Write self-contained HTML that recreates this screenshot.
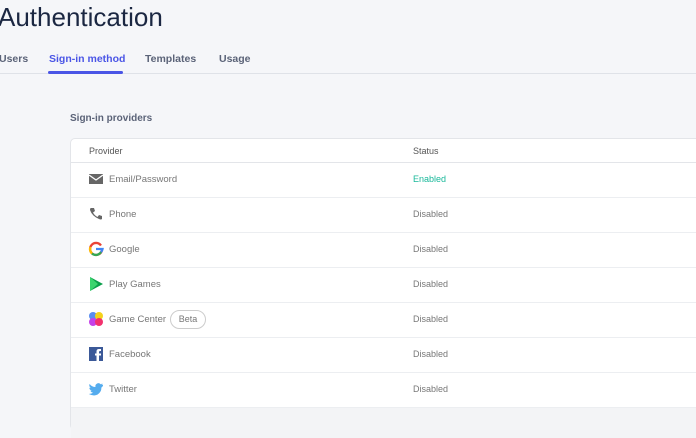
<html><head><style>
body{margin:0;width:696px;height:416px;background:#f5f6f9;font-family:"Liberation Sans",sans-serif;position:relative;overflow:hidden}
.t{position:absolute;left:-2px;top:2px;font-size:26px;color:#1b2742}
.tab{position:absolute;top:53px;font-size:10.5px;font-weight:bold;color:#5b6378}
.line{position:absolute;left:0;right:0;top:73px;height:1px;background:#dfe2e8}
.ul{position:absolute;left:48px;width:75px;top:71px;height:3px;background:#4a55e6;border-radius:2px}
.sp{position:absolute;left:70px;top:113px;font-size:10px;font-weight:bold;color:#5b6378}
.card{position:absolute;left:70px;top:138px;width:640px;height:290px;background:#fff;border:1px solid #e3e5e9;border-radius:5px}
.hd{position:absolute;top:0;left:0;right:0;height:23px;border-bottom:1px solid #e3e5e9;font-size:9px;color:#555}
.row{position:absolute;left:0;right:0;height:35px;border-bottom:1px solid #eceef1;font-size:9.5px;color:#777}
.row .n{position:absolute;left:38px;top:12px}
.row .s{position:absolute;left:342px;top:12px;font-size:9px}
.row .i{position:absolute;left:17px;top:9px;width:16px;height:16px}
.foot{position:absolute;left:0;right:0;top:269px;height:30px;background:#f3f4f6}
.beta{position:absolute;left:99px;top:8px;border:1px solid #ccc;border-radius:10px;width:34px;height:17px;line-height:17px;text-align:center;font-size:9px;color:#777}
</style></head><body>
<div class="t">Authentication</div>
<div class="tab" style="left:-1px">Users</div>
<div class="tab" style="left:49px;color:#4a55e6">Sign-in method</div>
<div class="tab" style="left:145px">Templates</div>
<div class="tab" style="left:219px">Usage</div>
<div class="line"></div><div class="ul"></div>
<div class="sp">Sign-in providers</div>
<div class="card">
<div class="hd"><span style="position:absolute;left:18px;top:7px">Provider</span><span style="position:absolute;left:342px;top:7px">Status</span></div>
<div class="row" style="top:23px"><svg class="i" viewBox="0 0 16 16"><rect x="1" y="3" width="14" height="10" fill="#666"/><path d="M1 4l7 5 7-5" stroke="#fff" stroke-width="1.3" fill="none"/></svg><span class="n">Email/Password</span><span class="s" style="color:#19b89a">Enabled</span></div>
<div class="row" style="top:58px"><svg class="i" viewBox="0 0 16 16"><path d="M3 2l3 0 1 3-2 1.5q1.5 3 4.5 4.5L11 9l3 1v3q-1 1-3 0Q4 10 2 4 2 2 3 2z" fill="#666"/></svg><span class="n">Phone</span><span class="s">Disabled</span></div>
<div class="row" style="top:93px"><svg class="i" viewBox="0 0 16 16"><path d="M13 4.5A6 6 0 1 0 14 9" stroke="#ea4335" stroke-width="2.3" fill="none"/><path d="M2.5 6A6 6 0 0 0 4 12.5" stroke="#fbbc05" stroke-width="2.3" fill="none"/><path d="M4 12.5A6 6 0 0 0 13 11" stroke="#34a853" stroke-width="2.3" fill="none"/><path d="M8 8h6.5A6 6 0 0 1 13 11" stroke="#4285f4" stroke-width="2.3" fill="none"/></svg><span class="n">Google</span><span class="s">Disabled</span></div>
<div class="row" style="top:128px"><svg class="i" viewBox="0 0 16 16"><path d="M2 1l13 7-13 7z" fill="#0a9f4a"/><path d="M2 1l8 7-8 7z" fill="#3bd46e"/></svg><span class="n">Play Games</span><span class="s">Disabled</span></div>
<div class="row" style="top:163px"><svg class="i" viewBox="0 0 16 16"><circle cx="5" cy="5" r="4" fill="#5a8df0"/><circle cx="11" cy="5" r="4" fill="#f4d21c"/><circle cx="5" cy="11" r="4" fill="#c541e8"/><circle cx="11" cy="11" r="4" fill="#f2316e"/></svg><span class="n">Game Center</span><span class="beta">Beta</span><span class="s">Disabled</span></div>
<div class="row" style="top:198px"><svg class="i" viewBox="0 0 16 16"><rect x="1" y="1" width="14" height="14" fill="#3b5998"/><path d="M11 15V9.5h2V7.5h-2V6q0-1 1-1h1V3h-2q-2.5 0-2.5 2.5v2H7v2h1.5V15z" fill="#fff"/></svg><span class="n">Facebook</span><span class="s">Disabled</span></div>
<div class="row" style="top:233px"><svg class="i" viewBox="0 0 16 16"><path d="M15 3.5q-1 .5-1.7.6 1-.6 1.2-1.6-.9.5-1.9.7A3 3 0 0 0 7.5 6Q4 6 1.6 3q-1 2 1 4-.6 0-1.3-.4 0 2.2 2.4 3-.6.2-1.3 0 .7 2 2.8 2Q3.2 13 .8 13q8 4 12-3 .6-1.5.6-3.5 1-.7 1.6-1.8z" fill="#55acee"/></svg><span class="n">Twitter</span><span class="s">Disabled</span></div>
<div class="foot"></div>
</div>
</body></html>
